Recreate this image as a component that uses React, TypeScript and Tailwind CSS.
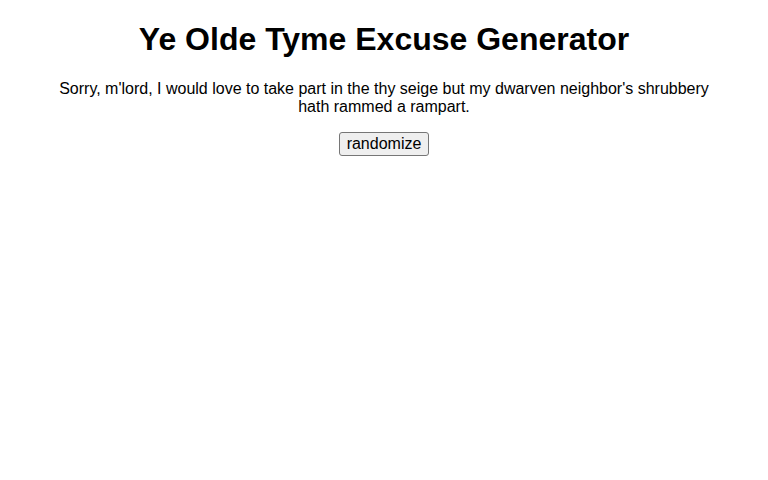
import { useState } from "react";

const excuses = [
  "Sorry, m'lord, I would love to take part in the thy seige but my dwarven neighbor's shrubbery hath rammed a rampart.",
  "Forgive me, good sir, but mine horse hath eaten the kingdom's last turnip.",
  "Alas, I cannot attend the joust, for a wandering bard hath stolen mine boots.",
];

const App = () => {
  const [index, setIndex] = useState(0);

  const handleRandomize = () => {
    setIndex((index + 1 + Math.floor(Math.random() * (excuses.length - 1))) % excuses.length);
  };

  return (
    <div className="min-h-[480px] bg-white px-[50px] text-center text-black font-['Liberation_Sans',Arial,sans-serif]">
      <h1 className="pt-[21px] mb-[22px] text-[32px] font-bold leading-[normal]">
        Ye Olde Tyme Excuse Generator
      </h1>
      <p className="mb-4 text-base leading-[normal]">{excuses[index]}</p>
      <button
        className="h-6 px-[7px] text-base leading-[18px] bg-[#efefef] border border-[#767676] rounded-[3px] hover:bg-[#e5e5e5]"
        onClick={handleRandomize}
      >
        randomize
      </button>
    </div>
  );
};

export default App;
